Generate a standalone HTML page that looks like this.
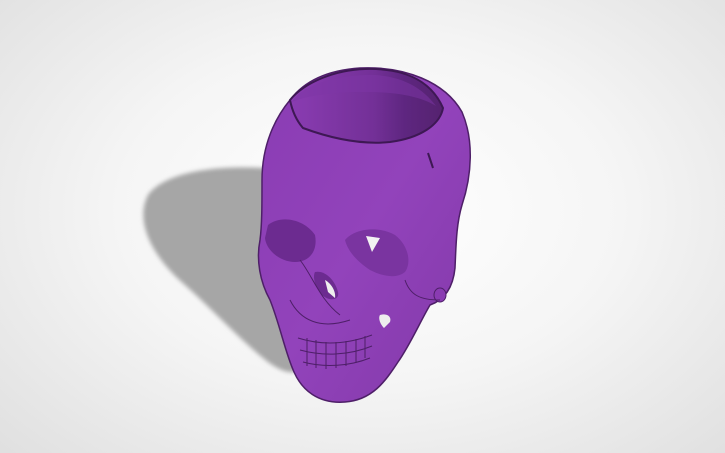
<!DOCTYPE html>
<html><head><style>
html,body{margin:0;padding:0;width:725px;height:453px;overflow:hidden}
body{background:radial-gradient(ellipse 560px 380px at 370px 210px,#ffffff 0%,#f5f5f5 45%,#dcdcdc 100%);}
svg{position:absolute;left:0;top:0}
</style></head><body>
<svg width="725" height="453" viewBox="0 0 725 453">
<defs>
<filter id="b"><feGaussianBlur stdDeviation="2"/></filter>
<linearGradient id="sk" x1="0" y1="0" x2="1" y2="1">
<stop offset="0" stop-color="#8a3cb3"/><stop offset="0.5" stop-color="#9243bb"/><stop offset="1" stop-color="#8238a8"/>
</linearGradient>
<linearGradient id="in" x1="0" y1="0" x2="1" y2="0">
<stop offset="0" stop-color="#8a3cb2"/><stop offset="0.55" stop-color="#733097"/><stop offset="0.75" stop-color="#5e2680"/><stop offset="1" stop-color="#55226f"/>
</linearGradient>
</defs>
<!-- shadow -->
<path d="M265 168 C215 165 165 172 148 195 C135 220 150 255 185 285 C215 312 240 340 268 362 C290 378 305 375 300 355 L270 250 Z" fill="#a6a6a6" filter="url(#b)"/>
<!-- skull body -->
<path d="M290 100 C305 80 330 70 360 68 C405 66 445 82 462 112 C474 140 472 175 462 205 C456 225 456 248 455 268 C453 288 444 300 430 305 C420 322 410 345 398 362 C385 382 372 400 345 402 C318 404 302 390 294 372 C285 352 280 325 270 300 C260 282 256 260 260 240 C262 225 262 205 262 180 C262 145 275 118 290 100 Z" fill="url(#sk)" stroke="#4e1f68" stroke-width="1.5"/>
<!-- top opening -->
<path d="M290 100 C305 82 335 70 365 69 C400 68 430 78 443 108 C440 125 420 138 390 142 C360 145 330 138 303 128 C296 120 292 110 290 100 Z" fill="url(#in)" stroke="#3e1854" stroke-width="2"/>
<path d="M292 102 C300 88 330 76 365 75 C395 74 420 84 436 106 C420 96 395 92 365 92 C330 92 305 96 292 102Z" fill="#7d36a5" opacity="0.5"/>
<line x1="428" y1="153" x2="433" y2="168" stroke="#3e1854" stroke-width="2"/>
<!-- eye sockets -->
<path d="M268 225 C282 214 305 220 315 235 C318 250 310 262 295 262 C280 262 266 250 265 238 Z" fill="#6c2b90"/>
<path d="M345 240 C355 228 380 226 395 235 C408 245 412 262 405 272 C395 280 380 275 370 270 C358 262 348 252 345 240 Z" fill="#7a34a0"/>
<path d="M366 236 L380 238 L372 252 Z" fill="#f2f2f2"/>
<!-- nose -->
<path d="M315 272 C325 270 335 280 338 292 C340 300 330 302 322 295 C316 288 312 278 315 272 Z" fill="#6c2b90"/>
<path d="M325 280 C332 284 336 292 335 298 L328 292 Z" fill="#eeeeee"/>
<path d="M380 315 C386 313 392 316 390 322 L384 328 C380 324 378 318 380 315Z" fill="#eeeeee"/>
<!-- ear -->
<ellipse cx="440" cy="295" rx="6" ry="7" fill="#8a3bb2" stroke="#4e1f68"/>
<!-- teeth -->
<g stroke="#4e1f68" stroke-width="1" fill="none">
<path d="M298 338 C320 345 345 345 372 335"/>
<path d="M300 350 C322 356 348 356 372 346"/>
<path d="M303 362 C325 368 350 366 370 358"/>
<path d="M307 338v28M316 340v28M326 342v27M336 342v26M346 341v25M356 339v24M365 336v22"/>
<path d="M300 260 C312 275 320 300 340 315 M405 280 C410 295 420 300 440 300 M290 300 C300 320 320 330 350 320"/>
</g>
</svg>
</body></html>
